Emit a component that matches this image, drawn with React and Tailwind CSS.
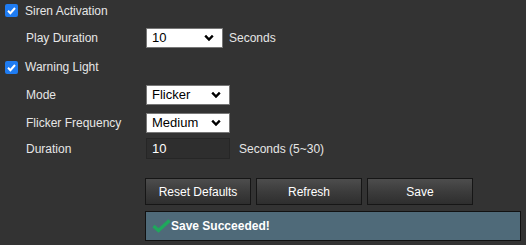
import React from "react";

function Check() {
  return (
    <span className="flex h-[13px] w-[13px] items-center justify-center rounded-[2px] bg-[#1f7cf2]">
      <svg width="11" height="11" viewBox="0 0 11 11">
        <path d="M2 5.8 L4.4 8.2 L9 3" fill="none" stroke="white" strokeWidth="2" />
      </svg>
    </span>
  );
}

function Chevron() {
  return (
    <svg width="10" height="7" viewBox="0 0 10 7" className="absolute right-[8px] top-1/2 -translate-y-1/2">
      <path d="M1.2 1.2 L5 5 L8.8 1.2" fill="none" stroke="black" strokeWidth="2.4" />
    </svg>
  );
}

function Select({ value, w }) {
  return (
    <div className={`relative flex h-[20px] items-center border border-[#777] bg-white pl-[5px] text-[13px] text-black ${w}`}>
      {value}
      <Chevron />
    </div>
  );
}

function Btn({ children }) {
  return (
    <div className="flex h-[27px] w-[106px] items-center justify-center border border-[#161616] bg-[linear-gradient(#4d4d4d,#3c3c3c_50%,#2e2e2e)] text-[12px] text-white">
      {children}
    </div>
  );
}

export default function App() {
  return (
    <div className="h-[245px] w-[526px] bg-[#333333] text-[12px] text-[#e6e6e6]" style={{ fontFamily: '"Liberation Sans", Arial, sans-serif' }}>
      <div className="flex h-[21px] items-center pl-[5px]">
        <Check />
        <span className="ml-[7px]">Siren Activation</span>
      </div>
      <div className="mt-[7px] flex h-[20px] items-center pl-[26px]">
        <span className="w-[120px]">Play Duration</span>
        <Select value="10" w="w-[77px]" />
        <span className="ml-[6px]">Seconds</span>
      </div>
      <div className="mt-[9px] flex h-[20px] items-center pl-[5px]">
        <Check />
        <span className="ml-[7px]">Warning Light</span>
      </div>
      <div className="mt-[8px] flex h-[20px] items-center pl-[26px]">
        <span className="w-[120px]">Mode</span>
        <Select value="Flicker" w="w-[84px]" />
      </div>
      <div className="mt-[8px] flex h-[20px] items-center pl-[26px]">
        <span className="w-[120px]">Flicker Frequency</span>
        <Select value="Medium" w="w-[84px]" />
      </div>
      <div className="mt-[5px] flex h-[21px] items-center pl-[26px]">
        <span className="w-[120px]">Duration</span>
        <div className="flex h-[21px] w-[84px] items-center border border-[#262626] bg-[#2e2e2e] pl-[5px] text-[13px] text-white">10</div>
        <span className="ml-[9px]">Seconds (5~30)</span>
      </div>
      <div className="mt-[19px] flex gap-[5px] pl-[145px]">
        <Btn>Reset Defaults</Btn>
        <Btn>Refresh</Btn>
        <Btn>Save</Btn>
      </div>
      <div className="ml-[145px] mt-[6px] flex h-[30px] w-[376px] items-center border border-[#111] bg-[#4f6a79] pl-[6px]">
        <svg width="19" height="14" viewBox="0 0 19 14">
          <path d="M1.5 7 L6.5 11.5 L17.5 1.5" fill="none" stroke="#1fa85c" strokeWidth="3.4" />
        </svg>
        <span className="font-bold text-white">Save Succeeded!</span>
      </div>
    </div>
  );
}
